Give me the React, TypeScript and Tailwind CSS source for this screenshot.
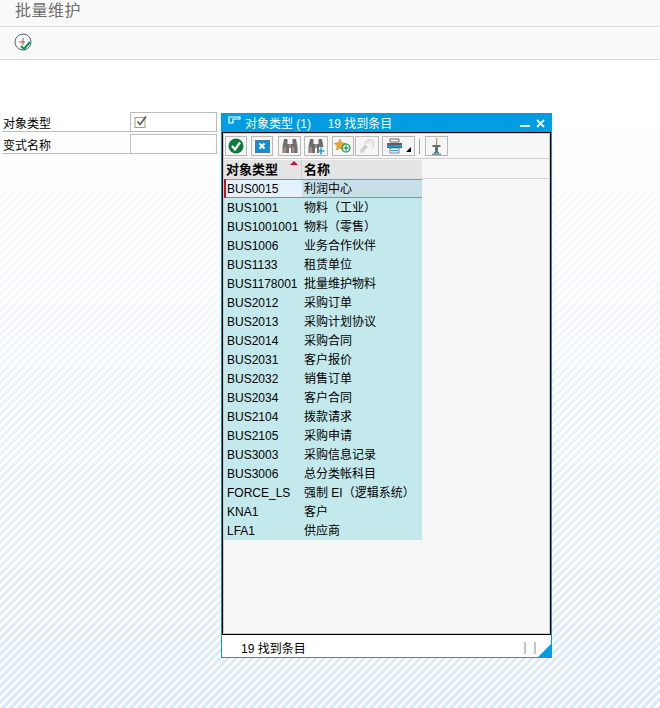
import React from "react";

const FONT = "font-['Liberation_Sans','Noto_Sans_CJK_SC',sans-serif]";

const rows = [
  ["BUS0015", "利润中心"],
  ["BUS1001", "物料（工业）"],
  ["BUS1001001", "物料（零售）"],
  ["BUS1006", "业务合作伙伴"],
  ["BUS1133", "租赁单位"],
  ["BUS1178001", "批量维护物料"],
  ["BUS2012", "采购订单"],
  ["BUS2013", "采购计划协议"],
  ["BUS2014", "采购合同"],
  ["BUS2031", "客户报价"],
  ["BUS2032", "销售订单"],
  ["BUS2034", "客户合同"],
  ["BUS2104", "拨款请求"],
  ["BUS2105", "采购申请"],
  ["BUS3003", "采购信息记录"],
  ["BUS3006", "总分类帐科目"],
  ["FORCE_LS", "强制 EI（逻辑系统）"],
  ["KNA1", "客户"],
  ["LFA1", "供应商"],
];

function ToolButton({ cls = "w-[22px]", children }: { cls?: string; children: React.ReactNode }) {
  return (
    <div className={`${cls} h-[20px] border border-[#b8b8b8] bg-[#f6f6f6] flex items-center justify-center relative`}>
      {children}
    </div>
  );
}

function Binoculars({ plus }: { plus?: boolean }) {
  return (
    <svg width="18" height="17" viewBox="0 0 18 17">
      <path d="M3 1h3.500v5H8v9H1.500V9z" fill="#6e6e6e" />
      <path d="M11.500 1H15l1.500 8v6H10V6h1.500z" fill="#6e6e6e" />
      <path d="M8 6h2v4H8z" fill="#9c8f86" />
      <path d="M2.500 9H5v6H2.500z" fill="#a58d7c" />
      {!plus && <path d="M11 9h2.500v6H11z" fill="#a58d7c" />}
      {plus && <path d="M12 9h6v8h-6z" fill="#f6f6f6" />}
      {plus && <path d="M13.200 9.500h1.600v2.700h2.700v1.600h-2.700v2.700h-1.600v-2.700h-2.700v-1.600h2.700z" fill="#1ea5e6" />}
    </svg>
  );
}

export default function App() {
  return (
    <div className={`relative w-[660px] h-[708px] overflow-hidden bg-white text-black text-[12px] ${FONT}`}>
      {/* title bar */}
      <div className="h-[27px] bg-[#f9f9f9] border-b border-[#dcdcdc] pl-[15px] pt-[1px] text-[16px] leading-[20px] text-[#6f6f6f] tracking-[0.5px]">
        批量维护
      </div>
      {/* app toolbar */}
      <div className="h-[33px] bg-[#f9f9f9] border-b border-[#dcdcdc] pl-[14px] pt-[6px]">
        <svg width="19" height="19" viewBox="0 0 19 19">
          <circle cx="9" cy="9" r="8" fill="none" stroke="#5b6a78" strokeWidth="1" />
          <path d="M9 5v7M5 9h6" stroke="#a0684a" strokeWidth="1" fill="none" />
          <path d="M7 13l3 3 6-7" stroke="#0a9a4a" strokeWidth="2.200" fill="none" />
        </svg>
      </div>

      {/* background + form */}
      <div className="h-[648px] pt-[52px] bg-[linear-gradient(to_bottom,#ffffff_30px,rgba(255,255,255,0)_640px),repeating-linear-gradient(135deg,#d8e9f6_0,#d8e9f6_2.83px,#ffffff_2.83px,#ffffff_5.66px)]">
        <div className="flex h-[20px] ml-[2px] w-[215px]">
          <div className="w-[128px] border-b border-[#bdbdbd] pl-[1px] pt-[5px] leading-[15px]">对象类型</div>
          <div className="w-[87px] border border-[#bdbdbd] bg-white pl-[3px] pt-[2px]">
            <svg width="14" height="14" viewBox="0 0 14 14">
              <rect x="1" y="2.500" width="10" height="10" fill="#fff" stroke="#b39a78" />
              <path d="M3.500 6.500l2.500 3L12 1.500" stroke="#555" strokeWidth="1.500" fill="none" />
            </svg>
          </div>
        </div>
        <div className="flex h-[20px] ml-[2px] w-[215px] mt-[2px]">
          <div className="w-[128px] border-b border-[#bdbdbd] pl-[1px] pt-[5px] leading-[15px]">变式名称</div>
          <div className="w-[87px] border border-[#bdbdbd] bg-white" />
        </div>
      </div>

      {/* value help popup */}
      <div className="absolute left-[221px] top-[113px] w-[331px] h-[545px] border border-[#009de0] bg-white flex flex-col">
        <div className="h-[18px] bg-[#009de0] text-white flex items-center relative shrink-0">
          <svg className="ml-[6px] mb-[4px]" width="13" height="10" viewBox="0 0 13 10">
            <path d="M1 1h11v2H5v4H1z" fill="none" stroke="#fff" strokeWidth="1.200" />
          </svg>
          <span className="ml-[4px] whitespace-pre leading-[15px] mt-[3px]">对象类型 (1)     19 找到条目</span>
          <div className="flex-1" />
          <div className="w-[10px] h-[2px] bg-[#e0eff8] mt-[6px] mr-[6px]" />
          <svg className="mr-[6px]" width="9" height="9" viewBox="0 0 9 9">
            <path d="M1 1l7 7M8 1L1 8" stroke="#e0eff8" strokeWidth="2" />
          </svg>
        </div>

        <div className="flex-1 border border-black min-h-0">
          <div className="h-full border border-[#cccccc] bg-[#f7f7f7] flex flex-col">
            {/* popup toolbar */}
            <div className="h-[25px] shrink-0 border-b border-[#cfcfcf] pl-[1px] pt-[2px] flex">
              <ToolButton>
                <svg width="16" height="16" viewBox="0 0 16 16">
                  <circle cx="8" cy="8" r="7.500" fill="#0b7a3b" />
                  <path d="M4 8l3 3.500L12 4.500" stroke="#fff" strokeWidth="2.200" fill="none" />
                </svg>
              </ToolButton>
              <ToolButton cls="w-[22px] ml-[4px]">
                <div className="w-[15px] h-[13px] bg-[#0f8fd6] border border-[#55779b] flex items-center justify-center">
                  <svg width="8" height="8" viewBox="0 0 8 8">
                    <path d="M1.500 1.500l5 5M6.500 1.500l-5 5" stroke="#fff" strokeWidth="2" />
                  </svg>
                </div>
              </ToolButton>
              <ToolButton cls="w-[23px] ml-[5px]">
                <Binoculars />
              </ToolButton>
              <ToolButton cls="w-[24px] ml-[3px]">
                <Binoculars plus />
              </ToolButton>
              <ToolButton cls="w-[22px] ml-[4px]">
                <svg width="18" height="16" viewBox="0 0 18 16">
                  <path d="M6 1l1.700 3.800 4 .4-3 2.800.9 4L6 10l-3.600 2 .9-4-3-2.800 4-.4z" fill="#eca82c" stroke="#b98322" strokeWidth="0.500" />
                  <circle cx="12" cy="10" r="4" fill="#e6f3e8" stroke="#0a8a48" strokeWidth="1.200" />
                  <path d="M12 7.500v5M9.500 10h5" stroke="#0a8a48" strokeWidth="1.200" />
                </svg>
              </ToolButton>
              <ToolButton cls="w-[24px] ml-[1px]">
                <svg width="18" height="17" viewBox="0 0 18 17">
                  <path d="M7 6a4.500 4.500 0 1 1 7 4" fill="none" stroke="#d4d4d4" strokeWidth="1.500" />
                  <path d="M9.500 6a2 2 0 1 1 3 1.500" fill="none" stroke="#dcdcdc" strokeWidth="1.200" />
                  <path d="M7 6l3 3-6 6.500-2.500-2.500z" fill="#d0d0d0" />
                </svg>
              </ToolButton>
              <ToolButton cls="w-[33px] ml-[3px]">
                <svg className="mr-[9px]" width="17" height="16" viewBox="0 0 17 16">
                  <path d="M4 1h9v3H4z" fill="none" stroke="#666" />
                  <path d="M1 5h15v5H1z" fill="#5f5f5f" />
                  <path d="M1 7h15v2H1z" fill="#1a9ae0" />
                  <path d="M4 10h9v5H4z" fill="#fff" stroke="#666" strokeWidth="0.800" />
                  <path d="M5 12h7v1H5z" fill="#1a9ae0" />
                </svg>
                <div className="absolute right-[3px] bottom-[3px] w-0 h-0 border-l-[5px] border-l-transparent border-b-[5px] border-b-black" />
              </ToolButton>
              <div className="w-px h-[15px] bg-[#9a9a9a] ml-[4px] mr-[5px] mt-[3px]" />
              <ToolButton cls="w-[23px]">
                <svg width="13" height="17" viewBox="0 0 13 17">
                  <path d="M6 0h1.200v7H6z" fill="#c08a60" />
                  <path d="M2.500 7h8v2H8v5H5V9H2.500z" fill="#6b6b6b" />
                  <path d="M4 14h5v1.500H4z" fill="#1a8fb0" />
                  <path d="M2 15.500h9V17H2z" fill="#8a8a8a" />
                </svg>
              </ToolButton>
            </div>

            {/* grid header */}
            <div className="h-[19px] mt-[1px] shrink-0 border-b border-[#d4d4d4] flex">
              <div className="w-[78px] h-[19px] bg-[#e4e4e4] border-r border-[#cfcfcf] pl-[2px] text-[13px] font-bold leading-[19px] relative">
                对象类型
                <div className="absolute right-[3px] top-[1px] w-0 h-0 border-x-[4px] border-x-transparent border-b-[4px] border-b-[#c8102e]" />
              </div>
              <div className="w-[120px] h-[19px] bg-[#e4e4e4] pl-[2px] text-[13px] font-bold leading-[19px]">名称</div>
            </div>
            {/* grid rows */}
            <div>
              {rows.map(([code, name], i) => (
                <div
                  key={code}
                  className={`flex h-[19px] w-[198px] leading-[16px] ${i === 0 ? "bg-[#c8dfea] border-y border-[#e8781e]" : "bg-[#c4e9ec] pt-[2px]"}`}
                >
                  <div className={`w-[78px] pl-[3px] relative ${i === 0 ? "bg-[#e4f1fa] pt-[1px]" : ""}`}>
                    {code}
                    {i === 0 && <div className="absolute left-0 top-[-1px] bottom-[-1px] w-[2px] bg-[#d0101e]" />}
                  </div>
                  <div className={`pl-[2px] whitespace-pre ${i === 0 ? "pt-[1px]" : ""}`}>{name}</div>
                </div>
              ))}
            </div>
          </div>
        </div>

        {/* status */}
        <div className="h-[22px] shrink-0 relative flex items-center pl-[19px] pt-[6px] leading-[15px]">
          19 找到条目
          <div className="absolute right-[25px] top-[7px] w-[2px] h-[12px] bg-[#c4c4c4]" />
          <div className="absolute right-[15px] top-[7px] w-[2px] h-[12px] bg-[#c4c4c4]" />
          <div className="absolute right-0 bottom-0 w-0 h-0 border-l-[13px] border-l-transparent border-b-[13px] border-b-[#009de0]" />
        </div>
      </div>
    </div>
  );
}
